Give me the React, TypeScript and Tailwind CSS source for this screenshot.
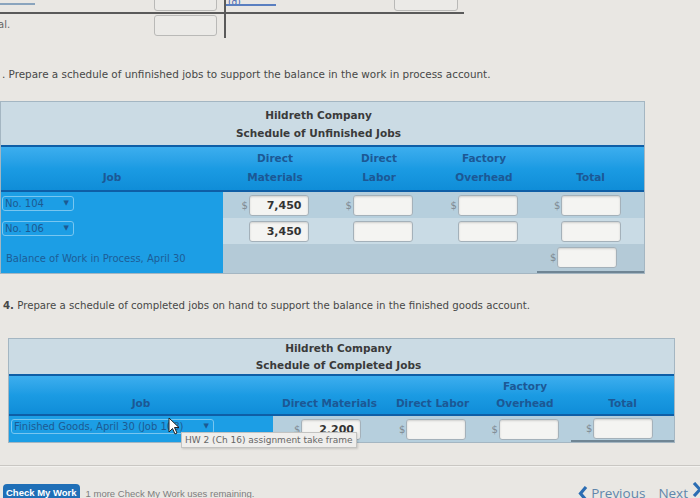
import React from "react";

const FONT = { fontFamily: '"DejaVu Sans", Verdana, sans-serif' };

function Inp({ value, dollar }: { value?: string; dollar?: boolean }) {
  return (
    <div className="flex items-center justify-center">
      <span className={dollar ? "text-[10px] text-[#7f8a92] w-[7px]" : "text-[10px] w-[7px] invisible"}>$</span>
      <div className="w-[60px] h-[21px] bg-[#f4f4f2] border border-[#a4b1ba] rounded-[3px] shadow-[inset_0_1px_2px_rgba(0,0,0,0.15)] text-right pr-[6px] text-[11px] font-bold text-[#333] leading-[19px]">
        {value}
      </div>
    </div>
  );
}

function Sel({ label, w }: { label: string; w: string }) {
  return (
    <div
      className={
        w +
        " h-[15px] border border-[#78c6f0] rounded-[3px] flex items-center justify-between pl-[2px] pr-[4px] text-[10px] leading-[13px] text-[#1c5a92] bg-[#1c9ee5] overflow-hidden whitespace-nowrap"
      }
    >
      <span>{label}</span>
      <span className="text-[7px] text-[#1c5a92]">▼</span>
    </div>
  );
}

export default function App() {
  return (
    <div
      className="relative w-[700px] h-[498px] overflow-hidden bg-[#e9e7e3] text-[#444]"
      style={FONT}
    >
      {/* top fragment */}
      <div className="grid grid-cols-[226px_238px] grid-rows-[14px_24px] w-[464px]">
        <div className="border-b-2 border-r-2 border-[#5a5a5a] flex justify-between items-start overflow-hidden">
          <div className="w-[35px] h-[5px] border-b-2 border-[#8aa4bd]" />
          <div className="w-[63px] h-[20px] -mt-[9px] mr-[7px] border border-[#b9b9b7] rounded-[3px] bg-[#ebeae7]" />
        </div>
        <div className="border-b-2 border-[#5a5a5a] flex justify-between items-start overflow-hidden">
          <div className="w-[50px] h-[6px] border-b-2 border-[#5a7fc0] text-[9px] leading-[4px] text-[#3d62b0] pl-[2px] overflow-hidden">(g)</div>
          <div className="w-[64px] h-[20px] -mt-[9px] mr-[6px] border border-[#b9b9b7] rounded-[3px] bg-[#ebeae7]" />
        </div>
        <div className="border-r-2 border-[#5a5a5a] flex justify-between items-start pt-[1px]">
          <span className="text-[10px] text-[#666] leading-[20px] -ml-[2px]">al.</span>
          <div className="w-[63px] h-[21px] mr-[7px] border border-[#b9b9b7] rounded-[3px] bg-[#ebeae7]" />
        </div>
        <div />
      </div>

      {/* sentence 1 */}
      <div className="mt-[29px] h-[14px] text-[10.4px] leading-[14px] text-[#474747] pl-[2px] whitespace-nowrap">
        . Prepare a schedule of unfinished jobs to support the balance in the work in process account.
      </div>

      {/* table 1 */}
      <div className="mt-[20px] w-[645px] border border-[#a4b6c2]">
        <div className="h-[43px] bg-[#cbdbe4] flex flex-col items-center justify-center text-[10.5px] font-bold text-[#3a3a3a] leading-[18px] pr-[8px]">
          <div>Hildreth Company</div>
          <div>Schedule of Unfinished Jobs</div>
        </div>
        <div className="grid grid-cols-[222px_104px_104px_106px_107px] h-[47px] border-y-2 border-[#0e5ea6] bg-linear-to-b from-[#3caeee] via-[#1b9be3] to-[#0f8dd8] text-[#1c5895] font-bold text-[10.5px] leading-[19px] items-end pb-[3px]">
          <div className="text-center">Job</div>
          <div className="text-center">
            <div>Direct</div>
            <div>Materials</div>
          </div>
          <div className="text-center">
            <div>Direct</div>
            <div>Labor</div>
          </div>
          <div className="text-center">
            <div>Factory</div>
            <div>Overhead</div>
          </div>
          <div className="text-center">Total</div>
        </div>
        <div className="grid grid-cols-[222px_104px_104px_106px_107px]">
          <div className="h-[26px] bg-[#1c9ee5] pt-[4px] pl-[1px]">
            <Sel label="No. 104" w="w-[72px]" />
          </div>
          <div className="bg-[#b6cfdd] flex items-center justify-center"><Inp value="7,450" dollar /></div>
          <div className="bg-[#b6cfdd] flex items-center justify-center"><Inp dollar /></div>
          <div className="bg-[#b6cfdd] flex items-center justify-center"><Inp dollar /></div>
          <div className="bg-[#b6cfdd] flex items-center justify-center pr-[6px]"><Inp dollar /></div>

          <div className="h-[26px] bg-[#1c9ee5] pt-[3px] pl-[1px]">
            <Sel label="No. 106" w="w-[72px]" />
          </div>
          <div className="bg-[#c9dbe5] flex items-center justify-center"><Inp value="3,450" /></div>
          <div className="bg-[#c9dbe5] flex items-center justify-center"><Inp /></div>
          <div className="bg-[#c9dbe5] flex items-center justify-center"><Inp /></div>
          <div className="bg-[#c9dbe5] flex items-center justify-center pr-[6px]"><Inp /></div>

          <div className="h-[29px] bg-[#1c9ee5] flex items-center pl-[5px] text-[10px] text-[#1c5d97]">
            Balance of Work in Process, April 30
          </div>
          <div className="col-span-3 bg-[#b4cad7]" />
          <div className="bg-[#b4cad7] flex items-center justify-center pr-[14px] border-b-2 border-[#6f8594]">
            <Inp dollar />
          </div>
        </div>
      </div>

      {/* sentence 2 */}
      <div className="mt-[25px] h-[14px] text-[10.2px] leading-[14px] text-[#474747] pl-[3px] whitespace-nowrap">
        <span className="font-bold">4.</span> Prepare a schedule of completed jobs on hand to support the balance in the finished goods account.
      </div>

      {/* table 2 */}
      <div className="mt-[25px] ml-[8px] w-[667px] border border-[#a4b6c2]">
        <div className="h-[35px] bg-[#cbdbe4] flex flex-col items-center justify-center text-[10.5px] font-bold text-[#3a3a3a] leading-[17px] pr-[6px]">
          <div>Hildreth Company</div>
          <div>Schedule of Completed Jobs</div>
        </div>
        <div className="grid grid-cols-[264px_113px_93px_92px_103px] h-[42px] border-y-2 border-[#0e5ea6] bg-linear-to-b from-[#3caeee] via-[#1b9be3] to-[#0f8dd8] text-[#1c5895] font-bold text-[10.5px] leading-[17px] items-end pb-[2px]">
          <div className="text-center">Job</div>
          <div className="text-center">Direct Materials</div>
          <div className="text-center">Direct Labor</div>
          <div className="text-center">
            <div>Factory</div>
            <div>Overhead</div>
          </div>
          <div className="text-center">Total</div>
        </div>
        <div className="grid grid-cols-[264px_113px_93px_92px_103px]">
          <div className="h-[26px] bg-[#1c9ee5] pt-[3px] pl-[2px]">
            <Sel label="Finished Goods, April 30 (Job 108)" w="w-[203px]" />
          </div>
          <div className="bg-[#b6cfdd] flex items-center justify-center pr-[4px]"><Inp value="2,200" dollar /></div>
          <div className="bg-[#b6cfdd] flex items-center justify-center"><Inp dollar /></div>
          <div className="bg-[#b6cfdd] flex items-center justify-center"><Inp dollar /></div>
          <div className="bg-[#b6cfdd] flex items-center justify-center pr-[6px] border-b-2 border-[#6f8594]"><Inp dollar /></div>
        </div>
      </div>

      {/* separator */}
      <div className="mt-[22px] border-t border-[#c9c7c3] shadow-[0_1px_0_#f3f2ef]" />

      {/* bottom bar */}
      <div className="mt-[18px] flex items-start justify-between">
        <div className="flex items-center">
          <div className="ml-[3px] px-[3px] h-[18px] rounded-t-[4px] bg-[#1f6fb7] text-white font-bold text-[9.5px] leading-[17px]" style={{ fontFamily: '"Liberation Sans", Arial, sans-serif' }}>
            Check My Work
          </div>
          <span className="ml-[6px] text-[9.5px] text-[#7d7d7d] leading-[17px]" style={{ fontFamily: '"Liberation Sans", Arial, sans-serif' }}>
            1 more Check My Work uses remaining.
          </span>
        </div>
        <div className="flex items-center mr-[-6px] pt-[1px]" style={{ fontFamily: '"Open Sans", sans-serif' }}>
          <svg width="10" height="15" viewBox="0 0 10 15" className="mr-[3px]">
            <path d="M8 1 L2.5 7.5 L8 14" fill="none" stroke="#2c6db3" strokeWidth="3.2" />
          </svg>
          <span className="text-[13.5px] text-[#6186ab] leading-[16px]">Previous</span>
          <span className="ml-[13px] text-[13.5px] text-[#6186ab] leading-[16px]">Next</span>
          <svg width="14" height="15" viewBox="0 0 14 15" className="ml-[4px] -mt-[8px]">
            <path d="M2 1 L8 7.5 L2 14" fill="none" stroke="#2c6db3" strokeWidth="3.2" />
          </svg>
        </div>
      </div>

      {/* tooltip */}
      <div className="absolute left-[181px] top-[432px] h-[16px] px-[3px] bg-[#efeeec] border border-[#c3c3c1] text-[9px] leading-[14px] text-[#666] whitespace-nowrap shadow-[1px_1px_2px_rgba(0,0,0,0.15)]">
        HW 2 (Ch 16) assignment take frame
      </div>

      {/* cursor */}
      <svg className="absolute left-[168px] top-[417px]" width="12" height="18" viewBox="0 0 12 18">
        <path d="M1 1 L1 15 L4.5 11.5 L7 17 L9 16 L6.5 10.5 L11 10.5 Z" fill="#ffffff" stroke="#222" strokeWidth="1" />
      </svg>
    </div>
  );
}
